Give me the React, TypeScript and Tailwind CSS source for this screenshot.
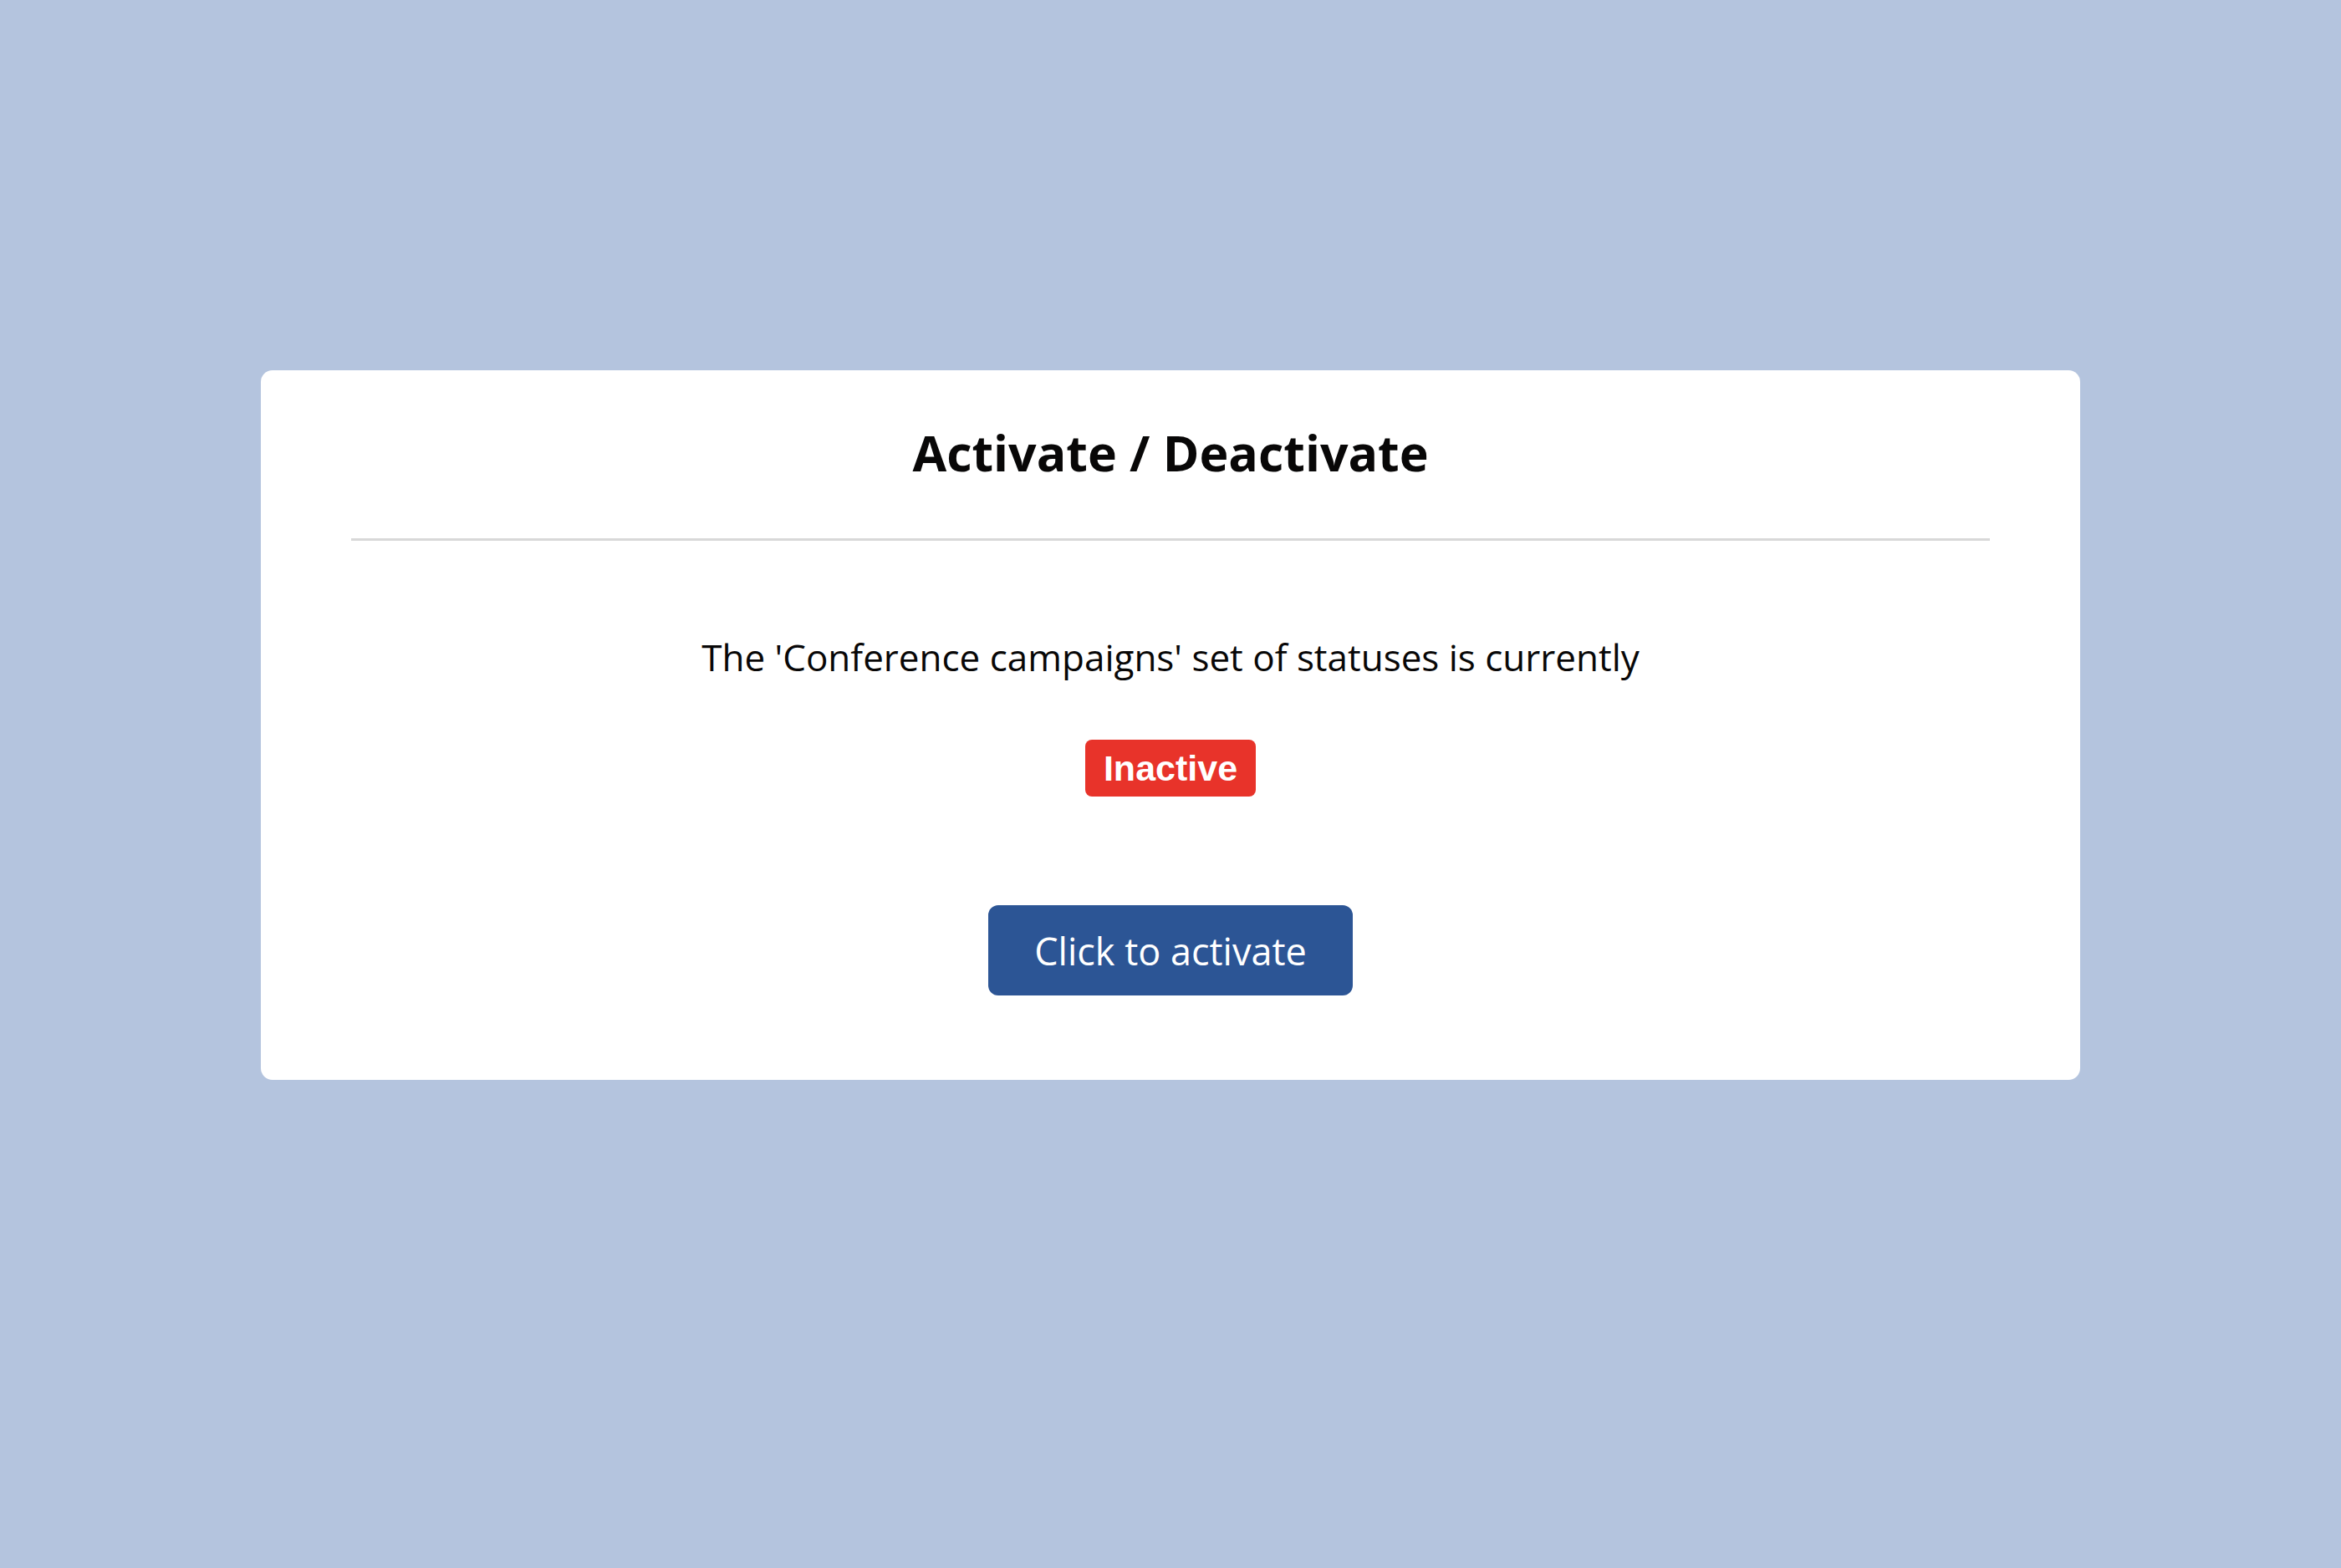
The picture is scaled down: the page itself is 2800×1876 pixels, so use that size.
export default function App() {
  return (
    <div className="min-h-[1876px] w-full bg-[#b4c4de] pt-[443px]" style={{ fontFamily: '"Open Sans", "Noto Sans", sans-serif' }}>
      <div className="mx-auto flex w-[2176px] flex-col items-center rounded-[14px] bg-white px-[108px] pb-[101px] pt-[69px]">
        <h1 className="text-[59px] font-bold leading-none text-[#080707]">Activate / Deactivate</h1>
        <div className="mt-[73px] h-[3px] w-full bg-[#d8d8d8]" />
        <p className="mt-[117px] text-[44px] leading-none text-[#080707]">
          The 'Conference campaigns' set of statuses is currently
        </p>
        <div
          className="mt-[77px] flex h-[68px] w-[204px] items-center justify-center rounded-[8px] bg-[#e8332a] text-[43px] font-bold leading-none text-white"
          style={{ fontFamily: '"Liberation Sans", Arial, sans-serif' }}
        >
          Inactive
        </div>
        <button className="mt-[130px] flex h-[108px] w-[436px] items-center justify-center rounded-[12px] bg-[#2c5595] text-[45px] leading-none text-white">
          Click to activate
        </button>
      </div>
    </div>
  );
}
